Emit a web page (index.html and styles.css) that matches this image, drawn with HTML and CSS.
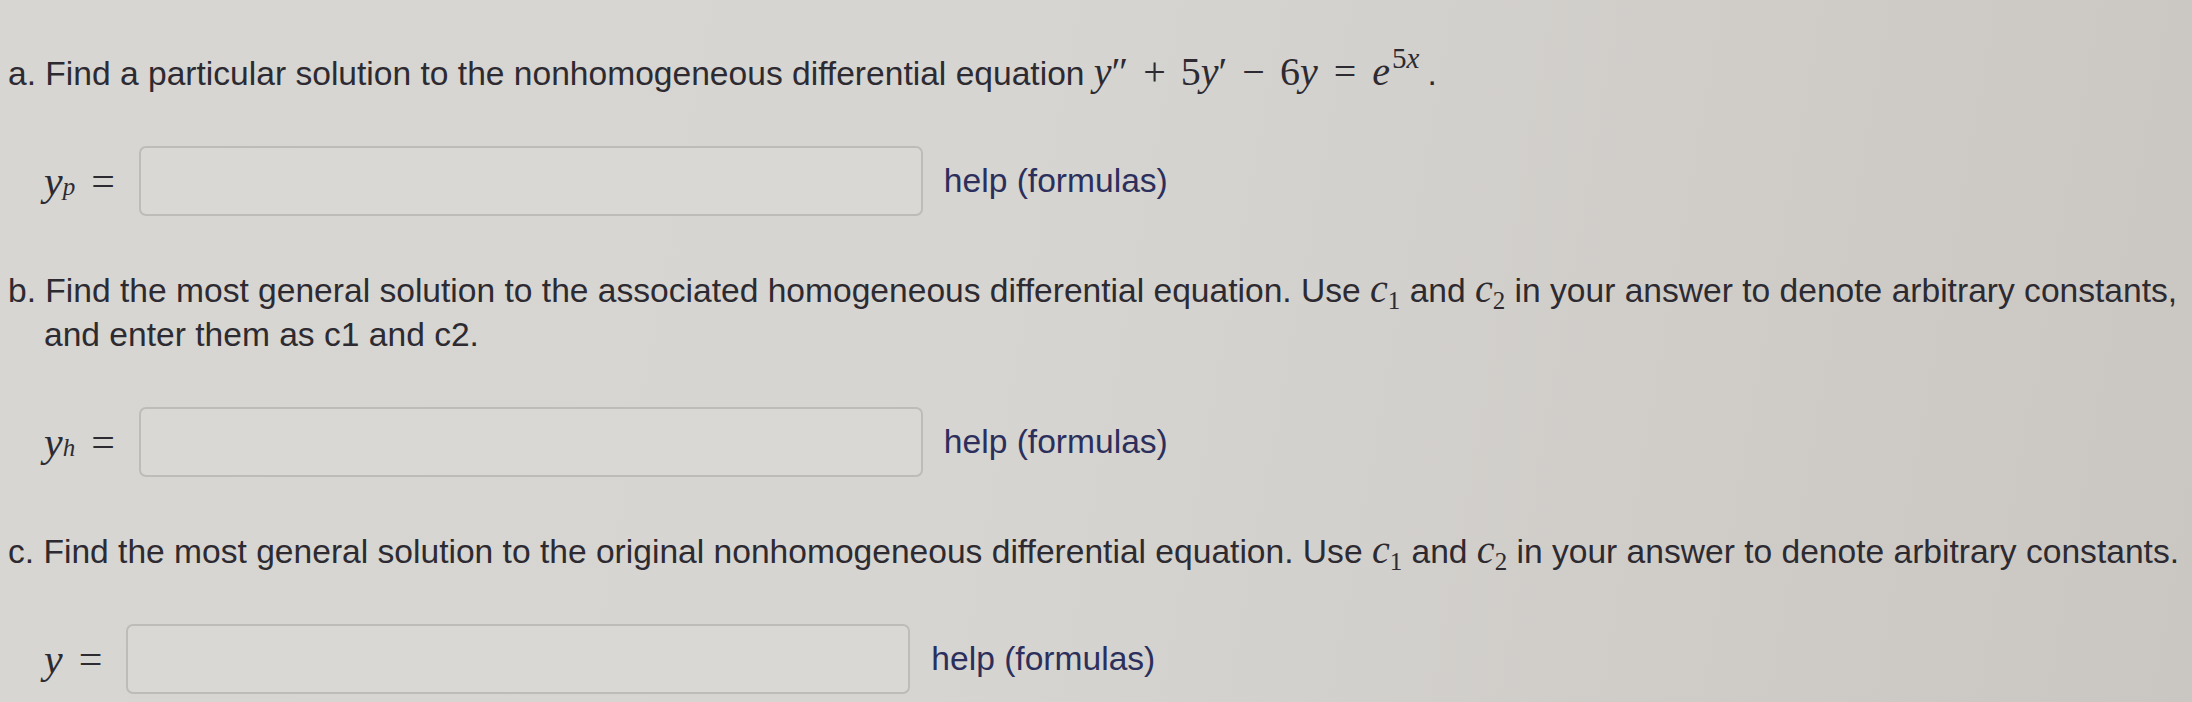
FILE: index.html
```html
<!DOCTYPE html>
<html lang="en">
<head>
    <meta charset="UTF-8">
    <title>Differential equations</title>
    <link rel="stylesheet" href="styles.css">
</head>
<body>
    <div class="problem">
        <p class="question">a. Find a particular solution to the nonhomogeneous differential equation
            <span class="math"><i>y</i>&Prime;<span class="op">+</span>5<i>y</i>&prime;<span class="op">&minus;</span>6<i>y</i><span class="rel">=</span><i>e</i><sup>5<i>x</i></sup></span><span class="dot">.</span></p>
        <div class="answer">
            <span class="label math"><i>y</i><sub><i>p</i></sub><span class="rel">=</span></span>
            <span class="box"></span>
            <a class="help" href="#">help (formulas)</a>
        </div>

        <p class="question">b. Find the most general solution to the associated homogeneous differential equation. Use <span class="math"><i>c</i><sub>1</sub></span> and <span class="math"><i>c</i><sub>2</sub></span> in your answer to denote arbitrary constants,<br>
            <span class="indent">and enter them as c1 and c2.</span></p>
        <div class="answer">
            <span class="label math"><i>y</i><sub><i>h</i></sub><span class="rel">=</span></span>
            <span class="box"></span>
            <a class="help" href="#">help (formulas)</a>
        </div>

        <p class="question">c. Find the most general solution to the original nonhomogeneous differential equation. Use <span class="math"><i>c</i><sub>1</sub></span> and <span class="math"><i>c</i><sub>2</sub></span> in your answer to denote arbitrary constants.</p>
        <div class="answer last">
            <span class="label math"><i>y</i><span class="rel">=</span></span>
            <span class="box"></span>
            <a class="help" href="#">help (formulas)</a>
        </div>
    </div>
</body>
</html>
```

FILE: styles.css
```css
html, body { height: 100%; }
body { margin: 0; background: linear-gradient(100deg, #d7d6d2 0%, #d6d5d1 45%, #cfccc8 80%, #cac6c2 100%); font-family: "Liberation Sans", Arial, sans-serif; color: #2d2b31; overflow: hidden; }
.problem { padding: 52px 0 0 8px; }
.question { margin: 0; font-size: 33.6px; line-height: 44px; white-space: nowrap; }
.indent { padding-left: 36px; }
.math { font-family: "Liberation Serif", "Times New Roman", serif; font-size: 40px; line-height: 0; }
.math i { font-style: italic; }
.math sub { font-size: 25px; vertical-align: -7px; line-height: 0; }
.math sup { font-size: 29px; vertical-align: 17px; line-height: 0; margin-left: 2px; }
.op { margin: 0 15px; }
.rel { margin: 0 16px; }
.dot { margin-left: 8px; }
.answer { display: flex; align-items: center; gap: 12px; margin: 50px 0 53px 36px; }
.answer.last { margin-bottom: 0; }
.label { display: inline-flex; align-items: baseline; line-height: 1; font-size: 42px; }
.label .rel { margin-right: 0; }
.box { width: 780px; height: 66px; border: 2px solid #bdbcb8; border-radius: 7px; background: #d9d8d5; margin-left: 12px; }
.help { font-size: 33.6px; color: #2c2f5c; text-decoration: none; margin-left: 9px; }
```
